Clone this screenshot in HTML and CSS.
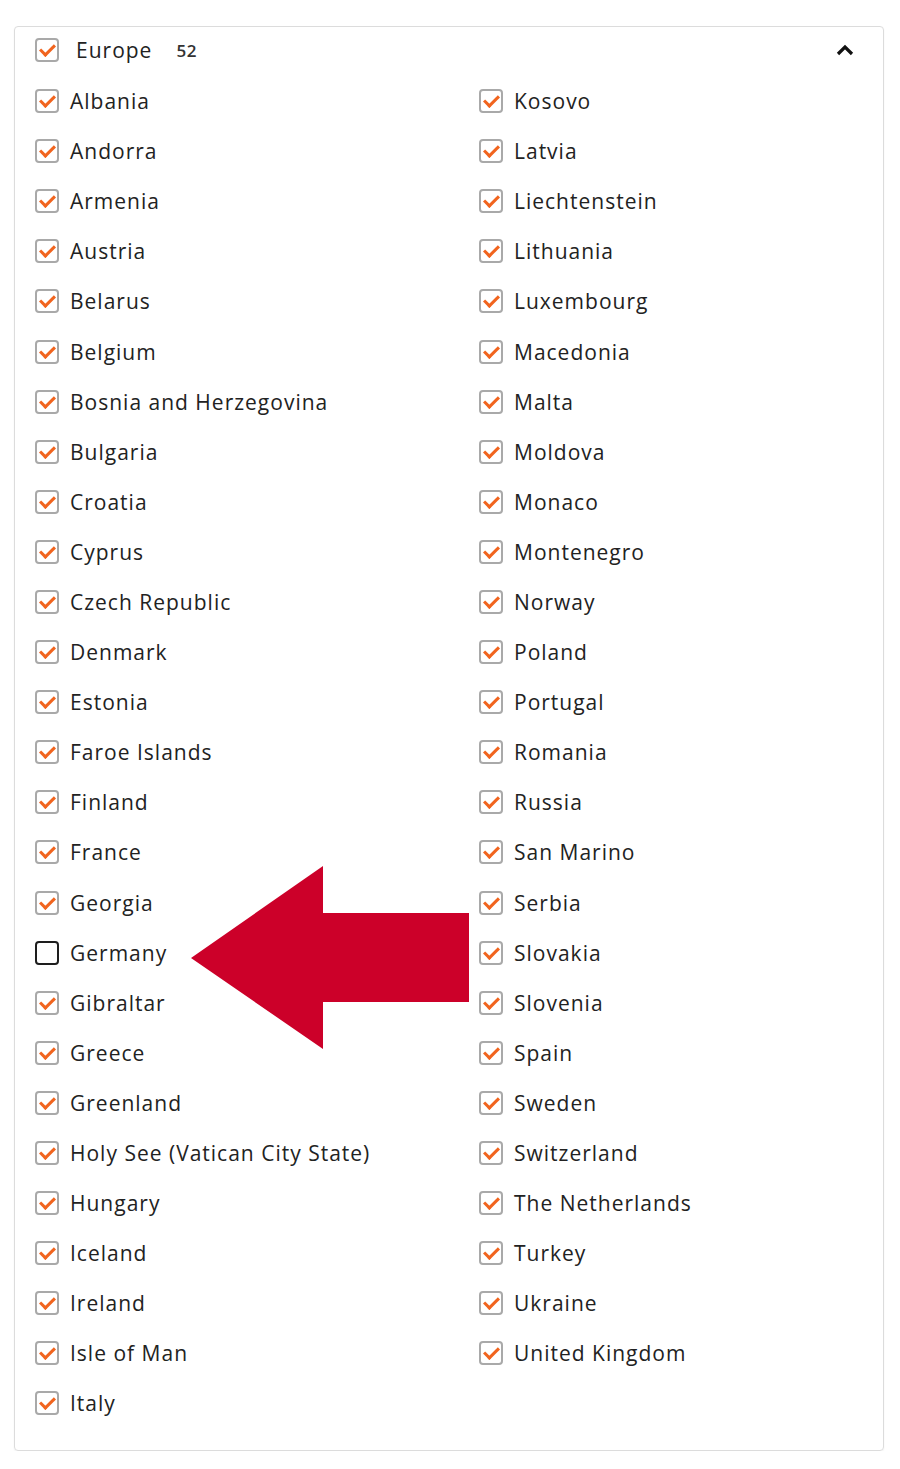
FILE: index.html
```html
<!DOCTYPE html>
<html lang="en">
<head>
    <meta charset="UTF-8">
    <meta name="viewport" content="width=device-width, initial-scale=1.0">
    <title>Shipping regions</title>
    <link rel="stylesheet" href="styles.css">
</head>
<body>
    <div class="region-card">
        <div class="region-header">
            <span class="check checked"></span>
            <span class="region-name">Europe</span>
            <span class="region-count">52</span>
            <svg class="chevron" width="20" height="14" viewBox="0 0 20 14">
                <polyline points="3,11 10,4 17,11" fill="none" stroke="#111" stroke-width="3.2"/>
            </svg>
        </div>
        <div class="country-grid">
            <ul class="country-list" id="col-left"></ul>
            <ul class="country-list" id="col-right"></ul>
        </div>
        <svg class="pointer-arrow" width="280" height="186" viewBox="0 0 280 186">
            <polygon points="1,93 133,1 133,48 279,48 279,137 133,137 133,184" fill="#cc0029"/>
        </svg>
    </div>
    <script>
        const left = ['Albania', 'Andorra', 'Armenia', 'Austria', 'Belarus', 'Belgium',
            'Bosnia and Herzegovina', 'Bulgaria', 'Croatia', 'Cyprus', 'Czech Republic',
            'Denmark', 'Estonia', 'Faroe Islands', 'Finland', 'France', 'Georgia', 'Germany',
            'Gibraltar', 'Greece', 'Greenland', 'Holy See (Vatican City State)', 'Hungary',
            'Iceland', 'Ireland', 'Isle of Man', 'Italy'];
        const right = ['Kosovo', 'Latvia', 'Liechtenstein', 'Lithuania', 'Luxembourg',
            'Macedonia', 'Malta', 'Moldova', 'Monaco', 'Montenegro', 'Norway', 'Poland',
            'Portugal', 'Romania', 'Russia', 'San Marino', 'Serbia', 'Slovakia', 'Slovenia',
            'Spain', 'Sweden', 'Switzerland', 'The Netherlands', 'Turkey', 'Ukraine',
            'United Kingdom'];

        function fill(id, names) {
            const list = document.getElementById(id);
            names.forEach(name => {
                const li = document.createElement('li');
                li.className = 'country';
                const box = document.createElement('span');
                box.className = name === 'Germany' ? 'check' : 'check checked';
                const label = document.createElement('span');
                label.className = 'country-name';
                label.innerText = name;
                li.appendChild(box);
                li.appendChild(label);
                list.appendChild(li);
            });
        }

        fill('col-left', left);
        fill('col-right', right);
    </script>
</body>
</html>
```

FILE: styles.css
```css
body {
    font-family: 'Open Sans', 'Liberation Sans', sans-serif;
    background: #fff;
    color: #222;
    margin: 0;
    padding: 26px 16px 0 14px;
}

.region-card {
    position: relative;
    border: 1px solid #dcdcdc;
    border-radius: 4px;
    padding: 0 20px 21px 20px;
    box-shadow: 0 1px 2px rgba(0, 0, 0, 0.06);
}

.region-header {
    display: flex;
    align-items: center;
    box-sizing: border-box;
    height: 49px;
    padding-bottom: 3px;
}

.region-name {
    font-size: 21px;
    letter-spacing: 1px;
    margin-left: 17px;
}

.region-count {
    font-size: 17px;
    font-weight: 600;
    letter-spacing: 0.5px;
    color: #333;
    margin-left: 24px;
}

.chevron {
    margin-left: auto;
    margin-right: 8px;
}

.country-grid {
    display: grid;
    grid-template-columns: 444px 1fr;
}

.country-list {
    list-style: none;
    margin: 0;
    padding: 0;
}

.country {
    display: flex;
    align-items: center;
    height: 50.1px;
}

.country-name {
    font-size: 21px;
    letter-spacing: 1px;
    margin-left: 11px;
}

.check {
    position: relative;
    box-sizing: border-box;
    width: 24px;
    height: 24px;
    border: 2px solid #1e1e1e;
    border-radius: 4px;
    flex-shrink: 0;
}

.check.checked {
    border-color: #a9a9a9;
}

.check.checked::after {
    content: '';
    position: absolute;
    left: 6px;
    top: 1px;
    width: 6px;
    height: 12px;
    border-right: 3px solid #f1641e;
    border-bottom: 3px solid #f1641e;
    transform: rotate(45deg);
}

.pointer-arrow {
    position: absolute;
    left: 175px;
    top: 838px;
}
```
